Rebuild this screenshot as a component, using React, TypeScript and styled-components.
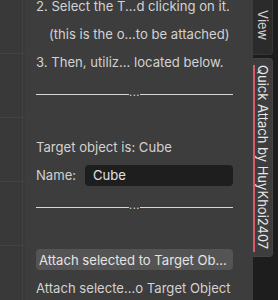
import React from "react";
import styled, { createGlobalStyle } from "styled-components";

const GlobalStyle = createGlobalStyle`
  html, body {
    margin: 0;
    padding: 0;
    background: #1d1d1d;
  }
  * {
    box-sizing: border-box;
  }
`;

const Screen = styled.div`
  display: flex;
  width: 278px;
  height: 300px;
  overflow: hidden;
  font-family: Inter, "Noto Sans", "DejaVu Sans", sans-serif;
  font-size: 13.1px;
  color: #d2d2d2;
`;

// bit of the 3D viewport showing on the left
const Viewport = styled.div`
  width: 25px;
  flex: none;
  background-color: #393939;
  background-image:
    linear-gradient(to right, transparent 22px, #424242 22px, #424242 23px, transparent 23px),
    linear-gradient(to bottom, transparent 53px, #434343 53px, #434343 54px, transparent 54px);
  background-size: 100% 64px;
  background-position: 0 0;
`;

const Panel = styled.div`
  width: 228px;
  flex: none;
  background: #3d3d3d;
  padding: 0 20px 0 11px;
  display: flex;
  flex-direction: column;
  margin-top: -8px;
`;

const Row = styled.div<{ $indent?: number }>`
  height: 28.2px;
  flex: none;
  display: flex;
  align-items: center;
  padding-left: ${(p) => p.$indent ?? 0}px;
  white-space: nowrap;
`;

const Divider = styled.div`
  flex: 1;
  display: flex;
  align-items: flex-end;
  height: 100%;
  padding-bottom: 9px;
`;

const Rule = styled.span`
  flex: 1;
  height: 1px;
  background: #d6d6d6;
  margin-bottom: 1px;
`;

const Dots = styled.span`
  font-size: 11px;
  line-height: 8px;
  letter-spacing: 0.5px;
  color: #d6d6d6;
`;

const Label = styled.span`
  width: 49px;
  flex: none;
`;

const Field = styled.div`
  flex: 1;
  height: 21px;
  border-radius: 4px;
  background: #1e1e1e;
  display: flex;
  align-items: center;
  padding-left: 8px;
  color: #e2e2e2;
`;

const Button = styled.div`
  flex: 1;
  height: 21px;
  border-radius: 4px;
  background: #545454;
  display: flex;
  align-items: center;
  padding-left: 3px;
  color: #e4e4e4;
`;

const TabBar = styled.div`
  width: 25px;
  flex: none;
  background: #1d1d1d;
  display: flex;
  flex-direction: column;
  gap: 3px;
`;

const Tab = styled.div<{ $active?: boolean; $height: number }>`
  position: relative;
  width: 20px;
  height: ${(p) => p.$height}px;
  margin-top: ${(p) => (p.$active ? 0 : -4)}px;
  border-radius: 0 4px 4px 0;
  background: ${(p) => (p.$active ? "#3d3d3d" : "#2b2b2b")};
  border: 1px solid ${(p) => (p.$active ? "#444444" : "#363636")};
  border-left: none;
  display: flex;
  align-items: center;
  justify-content: center;
  writing-mode: vertical-rl;
  font-size: 13px;
  color: ${(p) => (p.$active ? "#e8e8e8" : "#cfcfcf")};
  white-space: nowrap;
`;

const Accent = styled.span`
  position: absolute;
  left: 0;
  top: 6px;
  bottom: 4px;
  width: 2px;
  background: #e0576a;
`;

const Separator = () => (
  <Row>
    <Divider>
      <Rule />
      <Dots>...</Dots>
      <Rule />
    </Divider>
  </Row>
);

export default function App() {
  return (
    <Screen>
      <GlobalStyle />
      <Viewport />
      <Panel>
        <Row>2. Select the T...d clicking on it.</Row>
        <Row $indent={13}>(this is the o...to be attached)</Row>
        <Row>3. Then, utiliz... located below.</Row>
        <Separator />
        <Row />
        <Row>Target object is: Cube</Row>
        <Row>
          <Label>Name:</Label>
          <Field>Cube</Field>
        </Row>
        <Separator />
        <Row />
        <Row>
          <Button>Attach selected to Target Ob...</Button>
        </Row>
        <Row>Attach selecte...o Target Object</Row>
      </Panel>
      <TabBar>
        <Tab $height={59}>View</Tab>
        <Tab $active $height={199}>
          <Accent />
          Quick Attach by HuyKhoi2407
        </Tab>
      </TabBar>
    </Screen>
  );
}
